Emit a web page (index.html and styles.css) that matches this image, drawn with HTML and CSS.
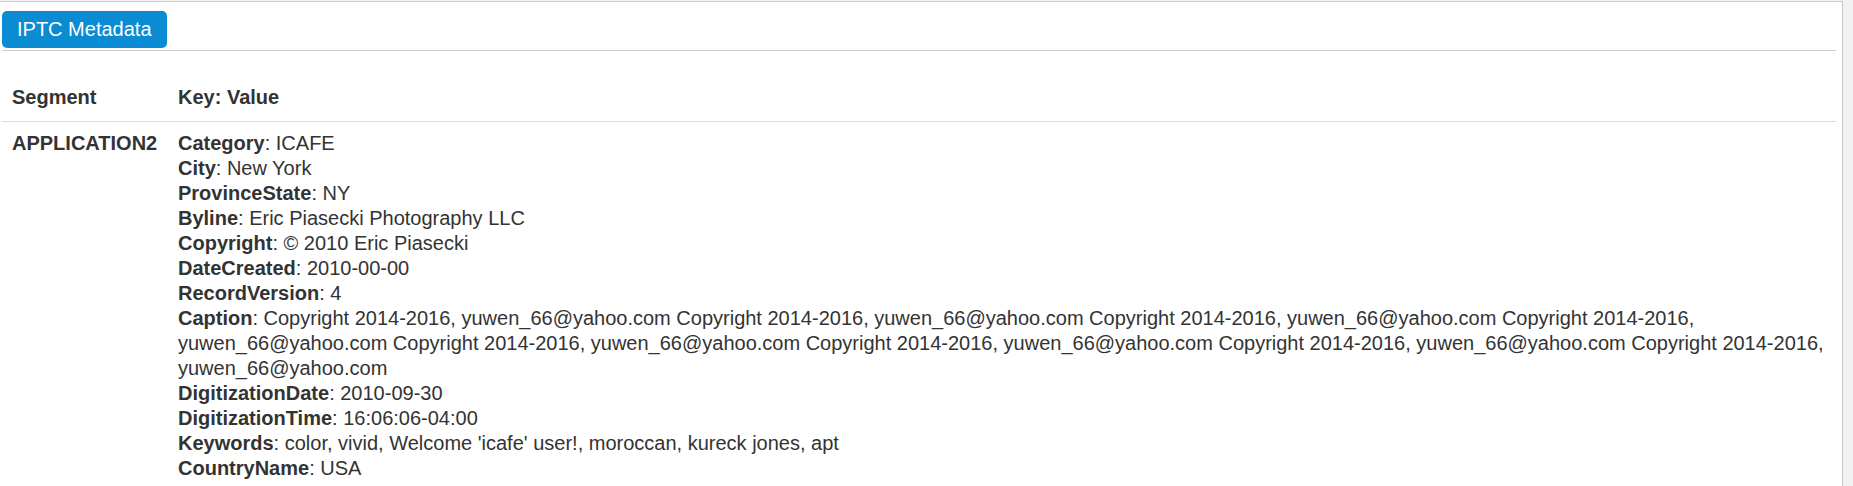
FILE: index.html
```html
<!DOCTYPE html>
<html>
  <head>
    <meta charset="utf-8">
    <title>IPTC Metadata</title>
    <link rel="stylesheet" href="styles.css">
  </head>
  <body>
    <div class="panel">
      <div class="toolbar">
        <button class="btn">IPTC Metadata</button>
      </div>
      <table class="meta">
        <colgroup>
          <col class="seg">
          <col>
        </colgroup>
        <thead>
          <tr>
            <th>Segment</th>
            <th>Key: Value</th>
          </tr>
        </thead>
        <tbody>
          <tr>
            <td class="name">APPLICATION2</td>
            <td>
              <div><b>Category</b>: ICAFE</div>
              <div><b>City</b>: New York</div>
              <div><b>ProvinceState</b>: NY</div>
              <div><b>Byline</b>: Eric Piasecki Photography LLC</div>
              <div><b>Copyright</b>: &copy; 2010 Eric Piasecki</div>
              <div><b>DateCreated</b>: 2010-00-00</div>
              <div><b>RecordVersion</b>: 4</div>
              <div><b>Caption</b>: Copyright 2014-2016, yuwen_66@yahoo.com Copyright 2014-2016, yuwen_66@yahoo.com Copyright 2014-2016, yuwen_66@yahoo.com Copyright 2014-2016, yuwen_66@yahoo.com Copyright 2014-2016, yuwen_66@yahoo.com Copyright 2014-2016, yuwen_66@yahoo.com Copyright 2014-2016, yuwen_66@yahoo.com Copyright 2014-2016, yuwen_66@yahoo.com</div>
              <div><b>DigitizationDate</b>: 2010-09-30</div>
              <div><b>DigitizationTime</b>: 16:06:06-04:00</div>
              <div><b>Keywords</b>: color, vivid, Welcome 'icafe' user!, moroccan, kureck jones, apt</div>
              <div><b>CountryName</b>: USA</div>
            </td>
          </tr>
        </tbody>
      </table>
    </div>
  </body>
</html>
```

FILE: styles.css
```css
html, body {
  margin: 0;
  background: #f2f2f2;
}
body {
  font-family: "Liberation Sans", Arial, sans-serif;
  font-size: 20px;
  line-height: 25px;
  color: #333;
}
div.panel {
  background: #fff;
  border-top: 1px solid #ccc;
  border-right: 1px solid #c8c8c8;
  margin: 1px 10px 0 0;
  padding: 0 6px 0 2px;
  min-height: 600px;
}
div.toolbar {
  padding: 9px 0 2px;
  border-bottom: 1px solid #ccc;
}
button.btn {
  display: block;
  height: 37px;
  padding: 0 15px;
  border: none;
  border-radius: 5px;
  background: #0a8bd2;
  color: #fff;
  font-family: inherit;
  font-size: 20px;
  line-height: 25px;
}
table.meta {
  width: 100%;
  margin-top: 26px;
  border-collapse: collapse;
  table-layout: fixed;
}
table.meta col.seg {
  width: 166px;
}
table.meta th {
  text-align: left;
  font-weight: bold;
  padding: 8px 10px 11px;
  border-bottom: 1px solid #ddd;
}
table.meta td {
  vertical-align: top;
  padding: 9px 10px;
}
table.meta td.name {
  font-weight: bold;
}
```
